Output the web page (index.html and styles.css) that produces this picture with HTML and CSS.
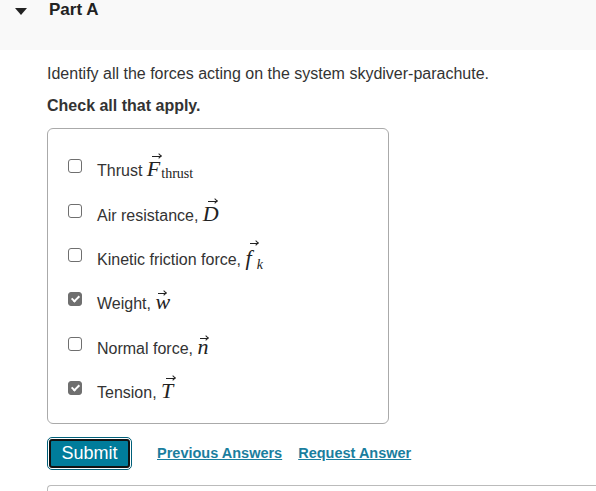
FILE: index.html
```html
<!DOCTYPE html>
<html lang="en">
<head>
    <meta charset="UTF-8">
    <meta name="viewport" content="width=device-width, initial-scale=1.0">
    <title>Part A</title>
    <link rel="stylesheet" href="styles.css">
</head>
<body>
    <div class="part-header">
        <span class="caret"></span>
        <span class="part-title">Part A</span>
    </div>

    <div class="part-body">
        <p class="prompt">Identify all the forces acting on the system skydiver-parachute.</p>
        <p class="instruction">Check all that apply.</p>

        <div class="choices">
            <label class="choice"><span class="box"></span><span class="text">Thrust <span class="vec">F</span><span class="sub">thrust</span></span></label>
            <label class="choice"><span class="box"></span><span class="text">Air resistance, <span class="vec">D</span></span></label>
            <label class="choice"><span class="box"></span><span class="text">Kinetic friction force, <span class="vec tall">f</span><span class="sub-i">k</span></span></label>
            <label class="choice"><span class="box checked"></span><span class="text">Weight, <span class="vec small">w</span></span></label>
            <label class="choice"><span class="box"></span><span class="text">Normal force, <span class="vec small">n</span></span></label>
            <label class="choice"><span class="box checked"></span><span class="text">Tension, <span class="vec">T</span></span></label>
        </div>

        <div class="actions">
            <button class="submit">Submit</button>
            <a class="link" href="#">Previous Answers</a>
            <a class="link" href="#">Request Answer</a>
        </div>

        <div class="next-box"></div>
    </div>
</body>
</html>
```

FILE: styles.css
```css
html, body { margin: 0; padding: 0; }
body { background-color: #ffffff; font-family: "Liberation Sans", Arial, sans-serif; color: #333333; overflow: hidden; }

.part-header { background-color: #f9f9f9; height: 50px; box-sizing: border-box; padding: 0 0 0 15px; display: flex; align-items: flex-start; }
.caret { width: 0; height: 0; border-left: 6px solid transparent; border-right: 6px solid transparent; border-top: 7px solid #222222; margin-top: 8px; }
.part-title { font-weight: bold; font-size: 17px; color: #222222; margin-left: 22px; line-height: 19px; }

.part-body { padding: 0 0 0 47px; }
.prompt { margin: 14px 0 0 0; font-size: 16px; line-height: 20px; color: #333333; }
.instruction { margin: 12px 0 0 0; font-size: 16px; font-weight: bold; line-height: 20px; color: #333333; }

.choices { width: 342px; height: 296px; box-sizing: border-box; margin-top: 12px; border: 1px solid #aaaaaa; border-radius: 6px; padding: 15px 0 0 20px; }
.choice { display: flex; align-items: center; height: 44.4px; font-size: 16px; color: #333333; }
.box { width: 14px; height: 14px; box-sizing: border-box; border: 1.5px solid #6f6f6f; border-radius: 3px; background: #ffffff; margin-right: 15px; position: relative; flex-shrink: 0; }
.box.checked { background: #6f6f6f; }
.box.checked::after { content: ""; position: absolute; left: 3.5px; top: 0.5px; width: 3px; height: 6px; border-right: 2px solid #ffffff; border-bottom: 2px solid #ffffff; transform: rotate(45deg); }
.text { display: inline-flex; align-items: baseline; white-space: pre; position: relative; top: 3px; }

/* math letters with a vector arrow over them */
.vec { font-family: "Liberation Serif", "Times New Roman", serif; font-style: italic; font-size: 22px; color: #222222; position: relative; padding-right: 1px; }
.vec::before { content: ""; position: absolute; left: 5px; top: 0px; width: 9px; border-top: 1.2px solid #222222; }
.vec::after { content: ""; position: absolute; left: 10px; top: -2px; width: 3px; height: 3px; border-top: 1.2px solid #222222; border-right: 1.2px solid #222222; transform: rotate(45deg); }
.vec.small::before { left: 3px; top: 4px; width: 8px; }
.vec.small::after { left: 7px; top: 2px; }
.vec.tall::before { left: 4px; top: -2px; width: 8px; }
.vec.tall::after { left: 8px; top: -4px; }
.sub { font-family: "Liberation Serif", "Times New Roman", serif; font-size: 14px; color: #222222; position: relative; top: 2px; }
.sub-i { font-family: "Liberation Serif", "Times New Roman", serif; font-style: italic; font-size: 14px; color: #222222; position: relative; top: 4px; margin-left: 4px; }

.actions { display: flex; align-items: center; margin-top: 13px; }
.submit { font-family: "Liberation Sans", Arial, sans-serif; font-size: 18px; color: #ffffff; background-color: #007c9b; border: 2px solid #111111; outline: 1px solid #00607a; outline-offset: 1px; border-radius: 3px; width: 81px; height: 29px; margin: 2px 0 0 2px; padding: 0; line-height: 25px; }
.link { font-size: 14.5px; font-weight: bold; color: #1a7e9e; text-decoration: underline; margin-left: 27px; }
.link + .link { margin-left: 16px; }

.next-box { margin-top: 17px; height: 20px; border: 1px solid #bbbbbb; border-right: none; border-radius: 4px 0 0 0; }
```
